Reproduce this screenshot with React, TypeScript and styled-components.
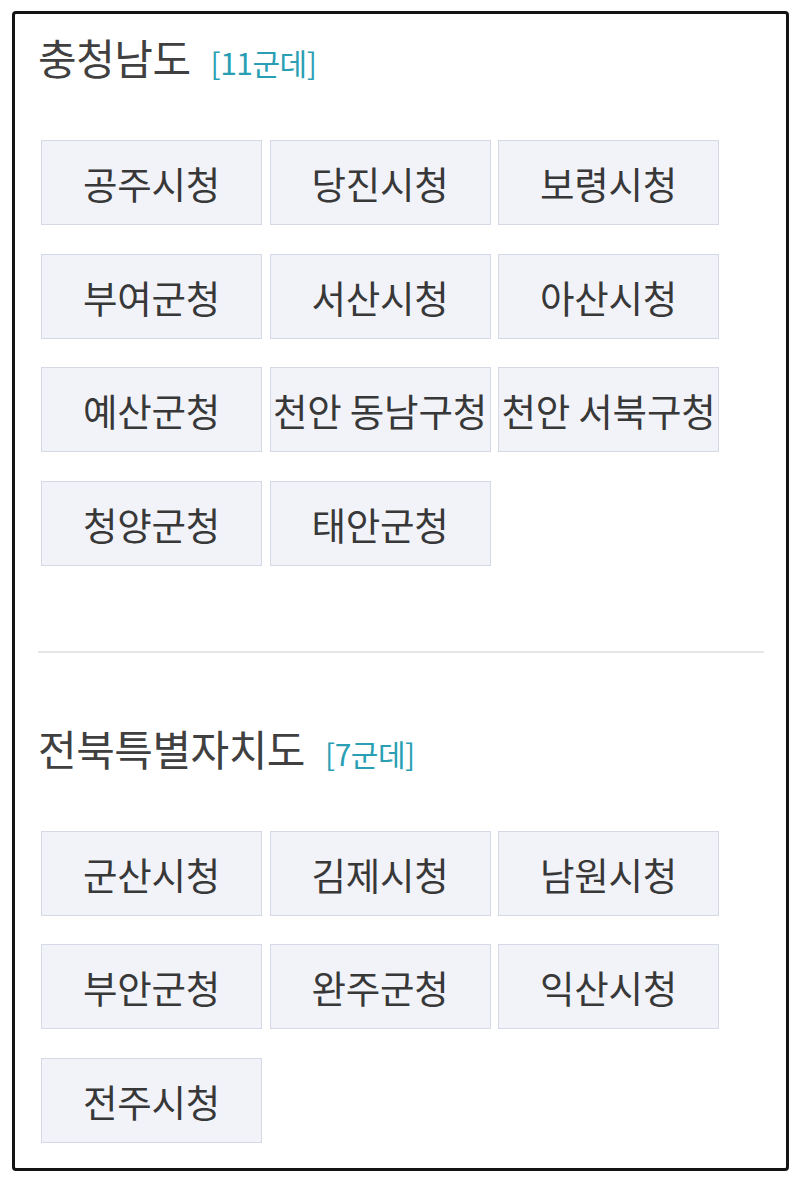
import React from 'react';
import styled, { createGlobalStyle } from 'styled-components';

const GlobalStyle = createGlobalStyle`
  html, body {
    margin: 0;
    padding: 0;
    background: #ffffff;
  }
  body {
    font-family: "Noto Sans CJK KR", "Noto Sans", sans-serif;
  }
`;

const Page = styled.div`
  padding: 11px 11px 10px 12px;
`;

const Frame = styled.div`
  border: 3px solid #141414;
  border-radius: 4px;
  height: 1160px;
  box-sizing: border-box;
  padding: 0 22px 0 23px;
`;

const Region = styled.section<{ $top: number }>`
  padding-top: ${({ $top }) => $top}px;
`;

const RegionHeader = styled.h2`
  display: flex;
  align-items: baseline;
  margin: 0;
  height: 46px;
  font-size: 42px;
  line-height: 46px;
  font-weight: 400;
  color: #404040;
  letter-spacing: -0.5px;
`;

const Count = styled.span`
  margin-left: 20px;
  font-size: 30px;
  color: #2a9fb4;
  letter-spacing: -0.5px;
`;

const OfficeGrid = styled.ul`
  list-style: none;
  margin: 60px 0 0 3px;
  padding: 0;
  display: grid;
  grid-template-columns: repeat(3, 221px);
  grid-auto-rows: 85px;
  column-gap: 7.5px;
  row-gap: 28.5px;
`;

const Office = styled.li`
  display: flex;
  align-items: center;
  justify-content: center;
  box-sizing: border-box;
  background: #f2f3f8;
  border: 1px solid #d5d8e7;
  font-size: 37.5px;
  color: #383838;
  white-space: nowrap;
  letter-spacing: -0.2px;
`;

const Divider = styled.hr`
  margin: 85px 0 0;
  border: none;
  border-top: 2px solid #e6e6e6;
`;

const regions = [
  {
    name: '충청남도',
    offices: [
      '공주시청', '당진시청', '보령시청',
      '부여군청', '서산시청', '아산시청',
      '예산군청', '천안 동남구청', '천안 서북구청',
      '청양군청', '태안군청',
    ],
  },
  {
    name: '전북특별자치도',
    offices: [
      '군산시청', '김제시청', '남원시청',
      '부안군청', '완주군청', '익산시청',
      '전주시청',
    ],
  },
];

const App: React.FC = () => {
  return (
    <>
      <GlobalStyle />
      <Page>
        <Frame>
          {regions.map((region, i) => (
            <React.Fragment key={region.name}>
              {i > 0 && <Divider />}
              <Region $top={i === 0 ? 20 : 72}>
                <RegionHeader>
                  {region.name}
                  <Count>[{region.offices.length}군데]</Count>
                </RegionHeader>
                <OfficeGrid>
                  {region.offices.map(office => (
                    <Office key={office}>{office}</Office>
                  ))}
                </OfficeGrid>
              </Region>
            </React.Fragment>
          ))}
        </Frame>
      </Page>
    </>
  );
};

export default App;
